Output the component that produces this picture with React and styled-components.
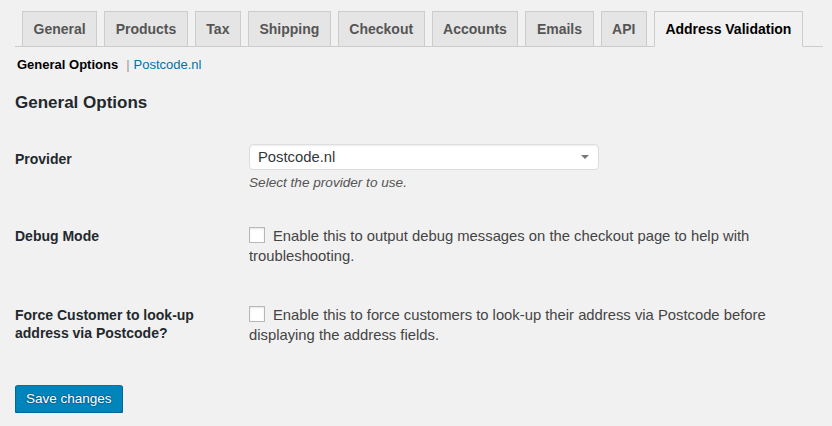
import styled, { createGlobalStyle, css } from 'styled-components';

const GlobalStyle = createGlobalStyle`
  html, body {
    margin: 0;
    padding: 0;
    background: #f1f1f1;
  }
  body {
    font-family: "Liberation Sans", Arial, sans-serif;
    color: #444;
    font-size: 13px;
  }
`;

const tabs = [
  'General',
  'Products',
  'Tax',
  'Shipping',
  'Checkout',
  'Accounts',
  'Emails',
  'API',
  'Address Validation',
];

export default function App() {
  return (
    <>
      <GlobalStyle />
      <Wrap>
        <TabBar>
          {tabs.map(tab => (
            <Tab key={tab} $active={tab === 'Address Validation'}>
              {tab}
            </Tab>
          ))}
        </TabBar>

        <SubNav>
          <Current>General Options</Current>
          <Sep>|</Sep>
          <SubLink href="#">Postcode.nl</SubLink>
        </SubNav>

        <Heading>General Options</Heading>

        <FormTable>
          <Row>
            <Label>Provider</Label>
            <Field $compact>
              <SelectBox>
                <span>Postcode.nl</span>
                <svg width={8} height={4} viewBox="0 0 8 4" aria-hidden="true">
                  <path d="M0 0H8L4 4Z" fill="#777" />
                </svg>
              </SelectBox>
              <Description>Select the provider to use.</Description>
            </Field>
          </Row>

          <Row>
            <Label>Debug Mode</Label>
            <Field>
              <CheckLabel>
                <Checkbox type="checkbox" />
                Enable this to output debug messages on the checkout page to help with
                troubleshooting.
              </CheckLabel>
            </Field>
          </Row>

          <Row>
            <Label>Force Customer to look-up address via Postcode?</Label>
            <Field>
              <CheckLabel>
                <Checkbox type="checkbox" />
                Enable this to force customers to look-up their address via Postcode
                before displaying the address fields.
              </CheckLabel>
            </Field>
          </Row>
        </FormTable>

        <Submit>
          <PrimaryButton type="button">Save changes</PrimaryButton>
        </Submit>
      </Wrap>
    </>
  );
}

const Wrap = styled.div`
  padding: 0 9px 0 15px;
`;

const TabBar = styled.nav`
  display: flex;
  align-items: flex-end;
  padding-top: 11px;
  border-bottom: 1px solid #ccc;
`;

const Tab = styled.a`
  box-sizing: border-box;
  height: 35px;
  margin-left: 7px;
  padding: 5px 10.5px;
  border: 1px solid #ccc;
  border-bottom: none;
  background: #e5e5e5;
  color: #555;
  font-size: 14px;
  font-weight: 700;
  line-height: 24px;
  white-space: nowrap;
  ${props =>
    props.$active &&
    css`
      height: 36px;
      margin-bottom: -1px;
      border-bottom: 1px solid #f1f1f1;
      background: #f1f1f1;
      color: #000;
    `}
`;

const SubNav = styled.div`
  display: flex;
  align-items: baseline;
  margin: 5px 0 0 2px;
  font-size: 13px;
  line-height: 26px;
`;

const Current = styled.span`
  color: #000;
  font-weight: 700;
`;

const Sep = styled.span`
  margin: 0 4px 0 8px;
  color: #999;
`;

const SubLink = styled.a`
  color: #0073aa;
  text-decoration: none;
`;

const Heading = styled.h2`
  margin: 14px 0 16px;
  color: #23282d;
  font-size: 17px;
  font-weight: 700;
  line-height: 22px;
`;

const FormTable = styled.div`
  display: flex;
  flex-direction: column;
`;

const Row = styled.div`
  display: grid;
  grid-template-columns: 234px 1fr;
  align-items: start;
`;

const Label = styled.div`
  padding: 20px 34px 20px 0;
  color: #23282d;
  font-size: 14px;
  font-weight: 700;
  line-height: 18px;
`;

const Field = styled.div`
  padding: ${props => (props.$compact ? '14px 10px 15px 0' : '20px 10px 20px 0')};
`;

const SelectBox = styled.div`
  box-sizing: border-box;
  display: flex;
  align-items: center;
  justify-content: space-between;
  width: 350px;
  height: 26px;
  padding: 0 9px 0 8px;
  border: 1px solid #ddd;
  border-radius: 4px;
  background: #fff;
  box-shadow: inset 0 1px 2px rgba(0, 0, 0, 0.07);
  color: #32373c;
  font-size: 14.8px;
`;

const Description = styled.p`
  margin: 4px 0 0;
  color: #555;
  font-size: 13.6px;
  font-style: italic;
  line-height: 18px;
`;

const CheckLabel = styled.label`
  display: block;
  color: #444;
  font-size: 14.8px;
  line-height: 19.5px;
`;

const Checkbox = styled.input`
  appearance: none;
  box-sizing: border-box;
  display: inline-block;
  width: 16px;
  height: 16px;
  margin: 0 8px 0 0;
  vertical-align: top;
  border: 1px solid #b4b9be;
  background: #fff;
  box-shadow: inset 0 1px 2px rgba(0, 0, 0, 0.1);
`;

const Submit = styled.div`
  margin-top: 20px;
`;

const PrimaryButton = styled.button`
  box-sizing: border-box;
  height: 28px;
  padding: 0 10px 1px;
  border: 1px solid;
  border-color: #0073aa #006799 #006799;
  border-radius: 3px;
  background: #0085ba;
  box-shadow: 0 1px 0 #006799;
  color: #fff;
  font-family: "Liberation Sans", Arial, sans-serif;
  font-size: 13.5px;
  line-height: 26px;
  text-shadow: 0 -1px 1px #006799, 1px 0 1px #006799, 0 1px 1px #006799, -1px 0 1px #006799;
  cursor: pointer;
`;
